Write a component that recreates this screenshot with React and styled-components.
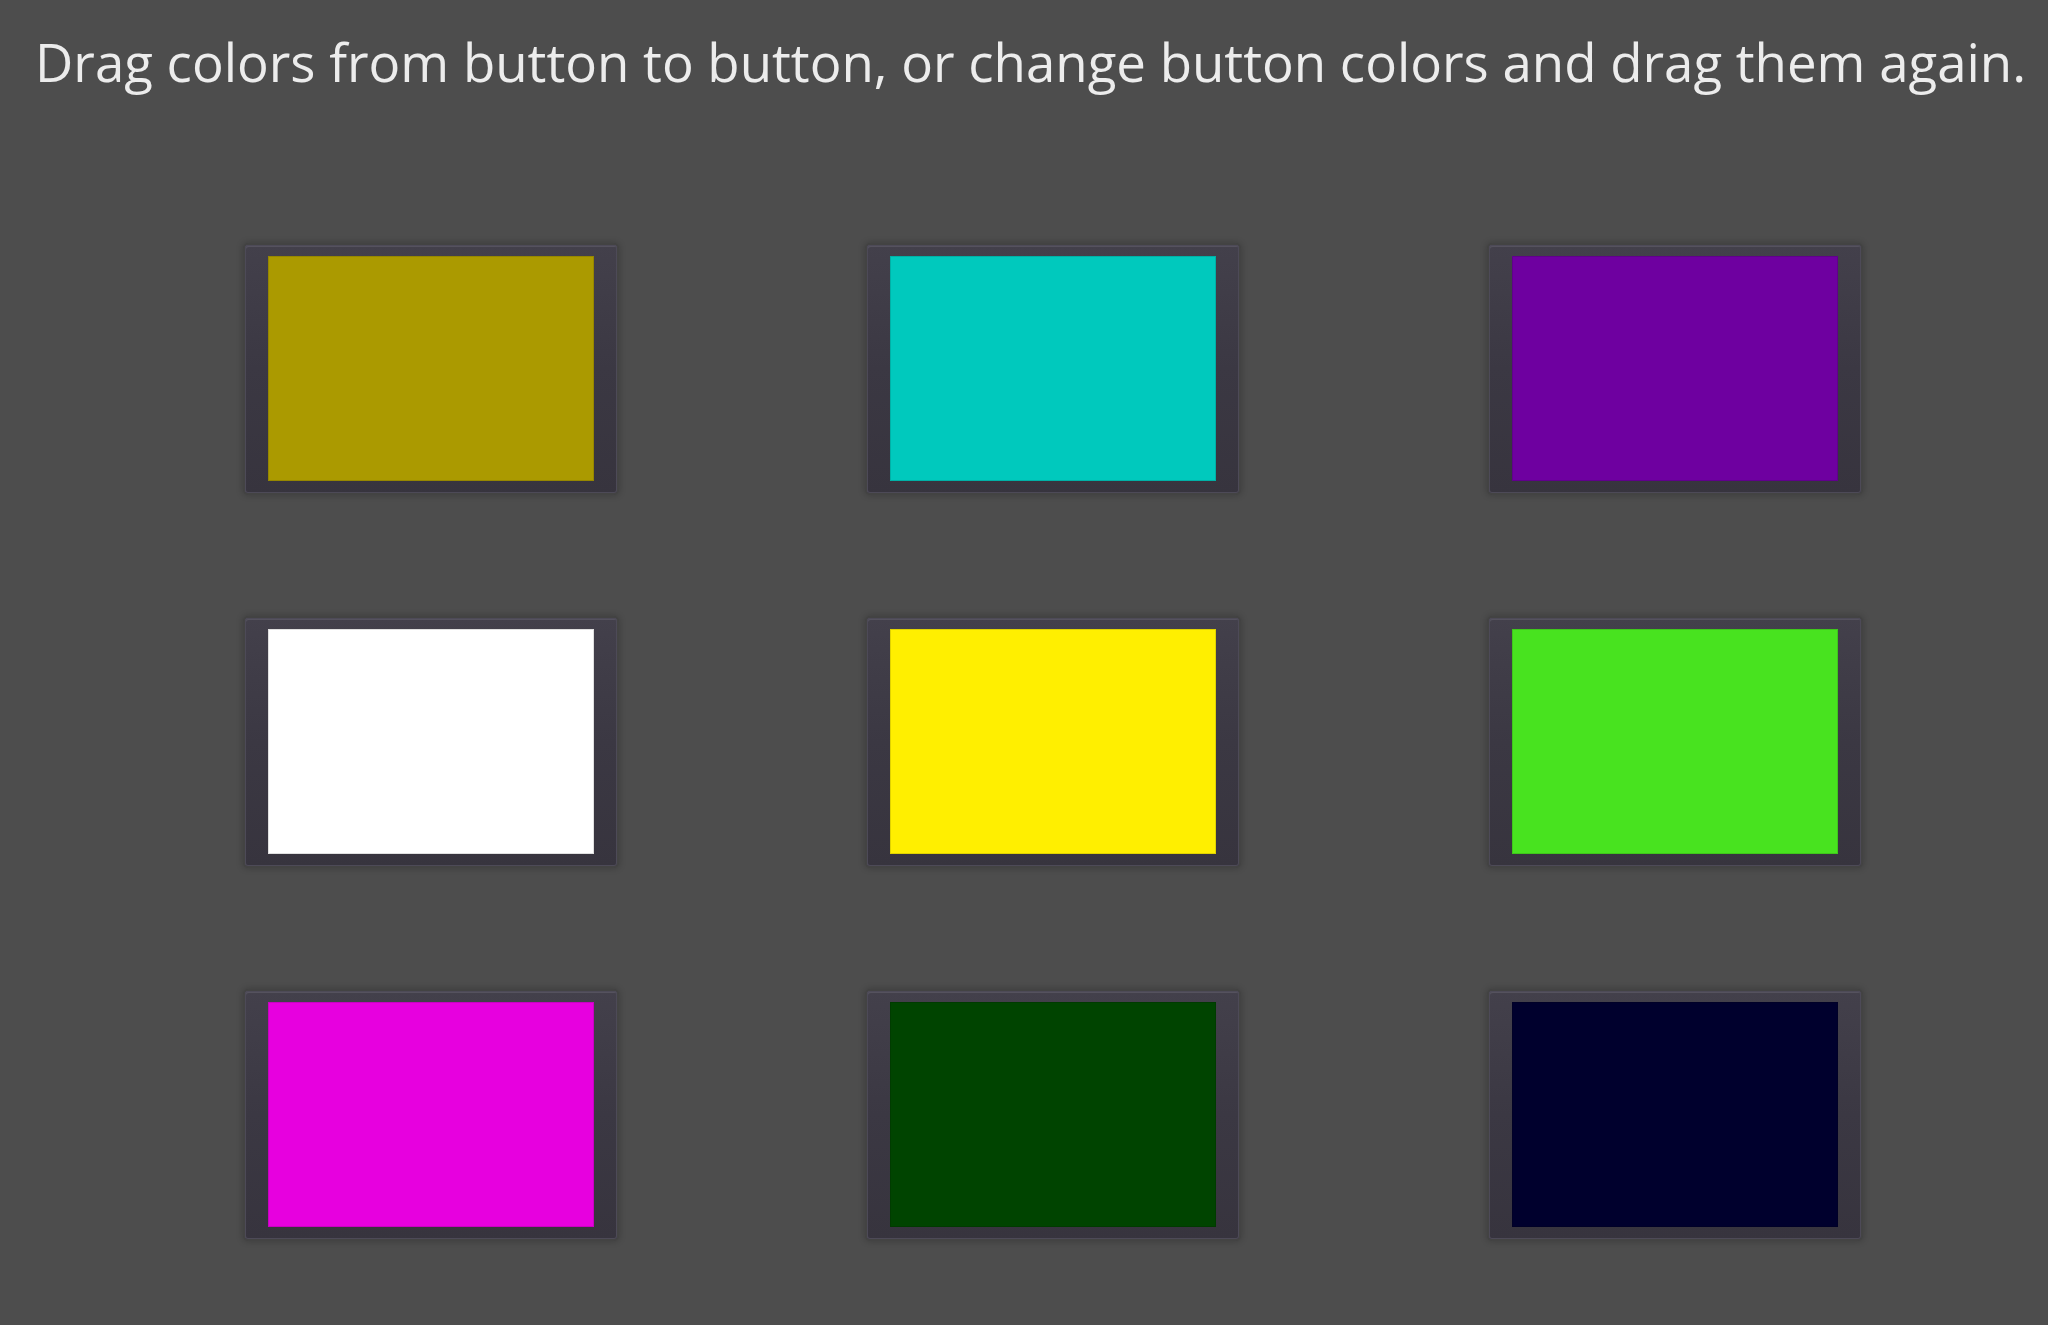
import React from 'react'
import styled, { createGlobalStyle } from 'styled-components'

const GlobalStyle = createGlobalStyle`
  html, body {
    margin: 0;
    padding: 0;
    background: #4d4d4d;
  }
  body {
    width: 2048px;
    height: 1325px;
    overflow: hidden;
    font-family: "Open Sans", "Noto Sans", "DejaVu Sans", sans-serif;
  }
`

const Screen = styled.main`
  display: flex;
  flex-direction: column;
  padding: 32px 0 0 35px;
`

const Hint = styled.h1`
  margin: 0;
  font-size: 52.8px;
  line-height: 60px;
  font-weight: 400;
  color: #ececec;
  white-space: nowrap;
`

const Grid = styled.div`
  display: grid;
  grid-template-columns: repeat(3, 372px);
  grid-auto-rows: 248px;
  column-gap: 250px;
  row-gap: 125px;
  margin: 153px 0 0 210px;
`

const ColorButton = styled.button`
  box-sizing: border-box;
  display: flex;
  padding: 11px 23px 12px 23px;
  border: none;
  border-radius: 3px;
  background: linear-gradient(180deg, #43404b 0%, #3b3843 50%, #37343e 100%);
  box-shadow:
    inset 0 0 0 1px #4d4a57,
    inset 1px 2px 0 #55525e,
    0 0 0 2px #434343,
    0 0 6px 3px rgba(0, 0, 0, 0.18);
  cursor: grab;
`

const Swatch = styled.span`
  flex: 1;
  background: ${p => p.$color};
  box-shadow: inset 0 0 0 1px rgba(0, 0, 0, 0.12);
`

const colors = [
  '#ab9a00', '#00c9bd', '#6e00a0',
  '#ffffff', '#ffef00', '#48e31f',
  '#e700df', '#004400', '#00002d',
]

export default function App() {
  return (
    <Screen>
      <GlobalStyle />
      <Hint>Drag colors from button to button, or change button colors and drag them again.</Hint>
      <Grid>
        {colors.map((c, i) => (
          <ColorButton key={i}>
            <Swatch $color={c} />
          </ColorButton>
        ))}
      </Grid>
    </Screen>
  )
}
